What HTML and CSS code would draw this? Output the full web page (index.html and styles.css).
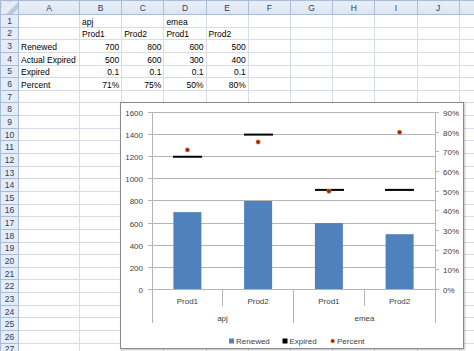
FILE: index.html
```html
<!DOCTYPE html>
<html lang="en">
<head>
    <meta charset="UTF-8">
    <meta name="viewport" content="width=device-width, initial-scale=1.0">
    <title>Book1 - Renewals</title>
    <link rel="stylesheet" href="styles.css">
</head>
<body>
<div class="sheet">
    <table class="grid">
        <colgroup>
            <col class="col-rh"><col class="col-a">
            <col class="col"><col class="col"><col class="col"><col class="col"><col class="col">
            <col class="col"><col class="col"><col class="col"><col class="col"><col class="col">
        </colgroup>
        <tr class="head">
            <th class="corner"></th><th>A</th><th>B</th><th>C</th><th>D</th><th>E</th><th>F</th><th>G</th><th>H</th><th>I</th><th>J</th><th></th>
        </tr>
        <tr><th>1</th><td></td><td>apj</td><td></td><td>emea</td><td></td><td></td><td></td><td></td><td></td><td></td><td></td></tr>
        <tr><th>2</th><td></td><td>Prod1</td><td>Prod2</td><td>Prod1</td><td>Prod2</td><td></td><td></td><td></td><td></td><td></td><td></td></tr>
        <tr><th>3</th><td>Renewed</td><td class="num">700</td><td class="num">800</td><td class="num">600</td><td class="num">500</td><td></td><td></td><td></td><td></td><td></td><td></td></tr>
        <tr><th>4</th><td>Actual Expired</td><td class="num">500</td><td class="num">600</td><td class="num">300</td><td class="num">400</td><td></td><td></td><td></td><td></td><td></td><td></td></tr>
        <tr><th>5</th><td>Expired</td><td class="num">0.1</td><td class="num">0.1</td><td class="num">0.1</td><td class="num">0.1</td><td></td><td></td><td></td><td></td><td></td><td></td></tr>
        <tr><th>6</th><td>Percent</td><td class="num">71%</td><td class="num">75%</td><td class="num">50%</td><td class="num">80%</td><td></td><td></td><td></td><td></td><td></td><td></td></tr>
        <tr><th>7</th><td></td><td></td><td></td><td></td><td></td><td></td><td></td><td></td><td></td><td></td><td></td></tr>
        <tr><th>8</th><td></td><td></td><td></td><td></td><td></td><td></td><td></td><td></td><td></td><td></td><td></td></tr>
        <tr><th>9</th><td></td><td></td><td></td><td></td><td></td><td></td><td></td><td></td><td></td><td></td><td></td></tr>
        <tr><th>10</th><td></td><td></td><td></td><td></td><td></td><td></td><td></td><td></td><td></td><td></td><td></td></tr>
        <tr><th>11</th><td></td><td></td><td></td><td></td><td></td><td></td><td></td><td></td><td></td><td></td><td></td></tr>
        <tr><th>12</th><td></td><td></td><td></td><td></td><td></td><td></td><td></td><td></td><td></td><td></td><td></td></tr>
        <tr><th>13</th><td></td><td></td><td></td><td></td><td></td><td></td><td></td><td></td><td></td><td></td><td></td></tr>
        <tr><th>14</th><td></td><td></td><td></td><td></td><td></td><td></td><td></td><td></td><td></td><td></td><td></td></tr>
        <tr><th>15</th><td></td><td></td><td></td><td></td><td></td><td></td><td></td><td></td><td></td><td></td><td></td></tr>
        <tr><th>16</th><td></td><td></td><td></td><td></td><td></td><td></td><td></td><td></td><td></td><td></td><td></td></tr>
        <tr><th>17</th><td></td><td></td><td></td><td></td><td></td><td></td><td></td><td></td><td></td><td></td><td></td></tr>
        <tr><th>18</th><td></td><td></td><td></td><td></td><td></td><td></td><td></td><td></td><td></td><td></td><td></td></tr>
        <tr><th>19</th><td></td><td></td><td></td><td></td><td></td><td></td><td></td><td></td><td></td><td></td><td></td></tr>
        <tr><th>20</th><td></td><td></td><td></td><td></td><td></td><td></td><td></td><td></td><td></td><td></td><td></td></tr>
        <tr><th>21</th><td></td><td></td><td></td><td></td><td></td><td></td><td></td><td></td><td></td><td></td><td></td></tr>
        <tr><th>22</th><td></td><td></td><td></td><td></td><td></td><td></td><td></td><td></td><td></td><td></td><td></td></tr>
        <tr><th>23</th><td></td><td></td><td></td><td></td><td></td><td></td><td></td><td></td><td></td><td></td><td></td></tr>
        <tr><th>24</th><td></td><td></td><td></td><td></td><td></td><td></td><td></td><td></td><td></td><td></td><td></td></tr>
        <tr><th>25</th><td></td><td></td><td></td><td></td><td></td><td></td><td></td><td></td><td></td><td></td><td></td></tr>
        <tr><th>26</th><td></td><td></td><td></td><td></td><td></td><td></td><td></td><td></td><td></td><td></td><td></td></tr>
        <tr><th>27</th><td></td><td></td><td></td><td></td><td></td><td></td><td></td><td></td><td></td><td></td><td></td></tr>
    </table>

    <!-- embedded chart, floats over the cells -->
    <div class="chart">
        <svg class="plot" width="342" height="245" viewBox="0 0 342 245">
            <g class="gridlines">
                <line x1="27" x2="314" y1="9.5" y2="9.5"/>
                <line x1="27" x2="314" y1="31.5" y2="31.5"/>
                <line x1="27" x2="314" y1="53.5" y2="53.5"/>
                <line x1="27" x2="314" y1="75.5" y2="75.5"/>
                <line x1="27" x2="314" y1="97.5" y2="97.5"/>
                <line x1="27" x2="314" y1="120.5" y2="120.5"/>
                <line x1="27" x2="314" y1="142.5" y2="142.5"/>
                <line x1="27" x2="314" y1="164.5" y2="164.5"/>
            </g>

            <g class="bars">
                <rect x="52.4" y="109.1" width="28" height="77.4"/>
                <rect x="123.1" y="98" width="28" height="88.5"/>
                <rect x="193.9" y="120.1" width="28" height="66.4"/>
                <rect x="264.6" y="131.2" width="28" height="55.3"/>
            </g>

            <g class="axis">
                <line x1="27" x2="314" y1="186.5" y2="186.5"/>
                <line x1="31.5" x2="31.5" y1="9.5" y2="220"/>
                <line x1="314.5" x2="314.5" y1="9.5" y2="220"/>
                <line x1="172.5" x2="172.5" y1="186.5" y2="220"/>
                <line x1="101.5" x2="101.5" y1="186.5" y2="203"/>
                <line x1="243.5" x2="243.5" y1="186.5" y2="203"/>
                <line x1="314" x2="318" y1="9.5" y2="9.5"/>
                <line x1="314" x2="318" y1="29.5" y2="29.5"/>
                <line x1="314" x2="318" y1="48.5" y2="48.5"/>
                <line x1="314" x2="318" y1="68.5" y2="68.5"/>
                <line x1="314" x2="318" y1="88.5" y2="88.5"/>
                <line x1="314" x2="318" y1="107.5" y2="107.5"/>
                <line x1="314" x2="318" y1="127.5" y2="127.5"/>
                <line x1="314" x2="318" y1="147.5" y2="147.5"/>
                <line x1="314" x2="318" y1="166.5" y2="166.5"/>
                <line x1="314" x2="318" y1="186.5" y2="186.5"/>
            </g>

            <g class="expired">
                <line x1="52" x2="81" y1="53.75" y2="53.75"/>
                <line x1="123" x2="152" y1="31.6" y2="31.6"/>
                <line x1="194" x2="223" y1="86.9" y2="86.9"/>
                <line x1="264" x2="293" y1="86.9" y2="86.9"/>
            </g>

            <g class="percent">
                <circle cx="66.4" cy="46.9" r="2.2"/>
                <circle cx="137.1" cy="39" r="2.2"/>
                <circle cx="207.9" cy="88.2" r="2.2"/>
                <circle cx="278.6" cy="29.2" r="2.2"/>
            </g>

            <g class="labels left">
                <text x="22" y="12.5">1600</text>
                <text x="22" y="34.5">1400</text>
                <text x="22" y="56.5">1200</text>
                <text x="22" y="78.5">1000</text>
                <text x="22" y="100.5">800</text>
                <text x="22" y="123.5">600</text>
                <text x="22" y="145.5">400</text>
                <text x="22" y="167.5">200</text>
                <text x="22" y="189.5">0</text>
            </g>

            <g class="labels right">
                <text x="322" y="12.5">90%</text>
                <text x="322" y="32.5">80%</text>
                <text x="322" y="51.5">70%</text>
                <text x="322" y="71.5">60%</text>
                <text x="322" y="91.5">50%</text>
                <text x="322" y="110.5">40%</text>
                <text x="322" y="130.5">30%</text>
                <text x="322" y="150.5">20%</text>
                <text x="322" y="169.5">10%</text>
                <text x="322" y="189.5">0%</text>
            </g>

            <g class="labels cats">
                <text x="66.4" y="200.5">Prod1</text>
                <text x="137.1" y="200.5">Prod2</text>
                <text x="207.9" y="200.5">Prod1</text>
                <text x="278.6" y="200.5">Prod2</text>
                <text x="101.5" y="218">apj</text>
                <text x="243.5" y="218">emea</text>
            </g>

            <g class="legend">
                <rect class="key-renewed" x="108" y="235.5" width="5" height="5"/>
                <text x="115" y="241">Renewed</text>
                <rect class="key-expired" x="161.5" y="235.5" width="5" height="5"/>
                <text x="168.5" y="241">Expired</text>
                <circle class="key-percent" cx="211.7" cy="238" r="2"/>
                <text x="216" y="241">Percent</text>
            </g>
        </svg>
    </div>
</div>
</body>
</html>
```

FILE: styles.css
```css
html, body {
    margin: 0;
    padding: 0;
    background: #fff;
    overflow: hidden;
}
.sheet {
    position: relative;
    width: 474px;
    height: 351px;
    overflow: hidden;
    font-family: "Liberation Sans", Arial, sans-serif;
    font-size: 8.5px;
    color: #000;
}
.grid {
    table-layout: fixed;
    border-collapse: collapse;
    width: 500px;
}
.col-rh { width: 18px; }
.col-a { width: 61px; }
.col { width: 42.2px; }
.grid tr {
    height: 12.65px;
}
.grid tr.head {
    height: 14px;
}
.grid td {
    border: 1px solid #d6dce8;
    padding: 0 2px;
    line-height: 10px;
    vertical-align: bottom;
    white-space: nowrap;
    overflow: hidden;
}
.grid td.num {
    text-align: right;
}
.grid th {
    background: linear-gradient(#e9eff8, #dbe5f2);
    border: 1px solid #a9bdd6;
    color: #30405a;
    font-weight: normal;
    line-height: 10px;
    padding: 0;
    vertical-align: middle;
}
.grid tr:not(.head) th {
    text-align: center;
    background: #e4ecf7;
}
.grid th.corner {
    background: linear-gradient(135deg, #e4ecf7 58%, #b9c7da 58%, #b9c7da 78%, #e4ecf7 78%);
}
.chart {
    position: absolute;
    left: 120px;
    top: 102px;
    width: 344px;
    height: 247px;
    box-sizing: border-box;
    border: 1px solid #8a8a8a;
    background: #fff;
    box-shadow: 1px 1px 2px rgba(0, 0, 0, 0.25);
}
.plot {
    display: block;
}
.plot .gridlines line,
.plot .axis line {
    stroke: #b5b5b5;
    stroke-width: 1;
}
.plot .bars rect {
    fill: #4f81bd;
}
.plot .expired line {
    stroke: #000;
    stroke-width: 2;
}
.plot .percent circle,
.plot .key-percent {
    fill: #9c2200;
    stroke: #f0a060;
    stroke-opacity: 0.6;
    stroke-width: 1;
}
.plot text {
    font-family: "Liberation Sans", Arial, sans-serif;
    font-size: 8px;
    fill: #404040;
}
.plot .left text {
    text-anchor: end;
}
.plot .cats text {
    text-anchor: middle;
}
.plot .key-renewed {
    fill: #4f81bd;
}
.plot .key-expired {
    fill: #000;
}
```
